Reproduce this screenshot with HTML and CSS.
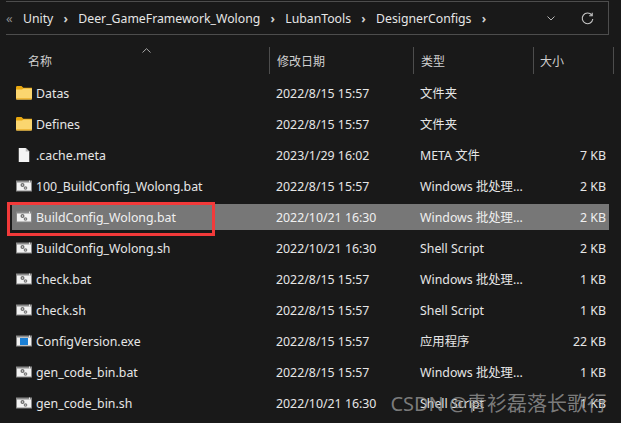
FILE: index.html
```html
<!DOCTYPE html>
<html lang="zh-CN">
<head>
    <meta charset="UTF-8">
    <title>DesignerConfigs</title>
    <link rel="stylesheet" href="styles.css">
</head>
<body>
    <svg class="defs" width="0" height="0">
        <symbol id="i-folder" viewBox="0 0 16 14">
            <path d="M0 1.500C0 .7.5 0 1.200 0h4.300l1.800 1.800H16V4H0z" fill="#e8a70f"/>
            <path d="M0 3.600l6-.2 1.500-1H15c.6 0 1 .5 1 1v9c0 .7-.5 1.200-1.200 1.200H1.200C.5 13.600 0 13.100 0 12.400z" fill="#fbd66f"/>
            <path d="M0 12h16v.4c0 .7-.5 1.200-1.200 1.200H1.200C.5 13.600 0 13.100 0 12.400z" fill="#eeb73a"/>
        </symbol>
        <symbol id="i-doc" viewBox="0 0 12 16">
            <path d="M0 0h8l4 4v12H0z" fill="#f4f4f4"/>
            <path d="M8 0l4 4H8z" fill="#bdbdbd"/>
        </symbol>
        <symbol id="i-bat" viewBox="0 0 16 11">
            <rect width="16" height="11" fill="#8a8a8a"/>
            <rect x="1" y="2" width="14" height="8" fill="#f2f2f2"/>
            <rect x="13" y="0" width="1" height="2" fill="#e8e8e8"/>
            <circle cx="6.500" cy="4.500" r="2" fill="#6e6e6e"/>
            <circle cx="9.500" cy="7.500" r="1.800" fill="#7c7c7c"/>
            <circle cx="6.500" cy="4.500" r=".7" fill="#e8e8e8"/>
            <circle cx="9.500" cy="7.500" r=".6" fill="#e8e8e8"/>
        </symbol>
        <symbol id="i-exe" viewBox="0 0 16 11">
            <rect width="16" height="11" fill="#8a8a8a"/>
            <rect x="1" y="2" width="14" height="8" fill="#f2f2f2"/>
            <rect x="13" y="0" width="1" height="2" fill="#e8e8e8"/>
            <rect x="4" y="2.500" width="8" height="7" fill="#1a7fd4"/>
        </symbol>
    </svg>

    <div class="explorer">
        <div class="address">
            <span class="crumb-back">«</span>
            <span class="crumb">Unity</span><span class="sep">›</span>
            <span class="crumb">Deer_GameFramework_Wolong</span><span class="sep">›</span>
            <span class="crumb">LubanTools</span><span class="sep">›</span>
            <span class="crumb">DesignerConfigs</span><span class="sep">›</span>
            <svg class="chevron" width="8" height="5" viewBox="0 0 8 5"><path d="M.5.5L4 4 7.500.5" fill="none" stroke="#b5b5b5"/></svg>
            <svg class="refresh" width="13" height="13" viewBox="0 0 13 13"><path d="M10.800 3.200A5.300 5.300 0 1 0 11.800 7" fill="none" stroke="#c8c8c8" stroke-width="1.100"/><path d="M11.200.8v3H8.200" fill="none" stroke="#c8c8c8" stroke-width="1.100"/></svg>
        </div>

        <div class="head">
            <div class="col-head name-head">名称<svg class="sort" width="9" height="5" viewBox="0 0 9 5"><path d="M.5 4.500L4.500.7l4 3.800" fill="none" stroke="#a8a8a8"/></svg></div>
            <div class="col-head">修改日期</div>
            <div class="col-head">类型</div>
            <div class="col-head size-head">大小</div>
        </div>

        <ul class="files">
            <li class="row"><span class="name"><svg class="icon"><use href="#i-folder"/></svg>Datas</span><span>2022/8/15 15:57</span><span>文件夹</span><span class="size"></span></li>
            <li class="row"><span class="name"><svg class="icon"><use href="#i-folder"/></svg>Defines</span><span>2022/8/15 15:57</span><span>文件夹</span><span class="size"></span></li>
            <li class="row"><span class="name"><svg class="icon"><use href="#i-doc"/></svg>.cache.meta</span><span>2023/1/29 16:02</span><span>META 文件</span><span class="size">7 KB</span></li>
            <li class="row"><span class="name"><svg class="icon"><use href="#i-bat"/></svg>100_BuildConfig_Wolong.bat</span><span>2022/8/15 15:57</span><span>Windows 批处理...</span><span class="size">2 KB</span></li>
            <li class="row selected"><span class="name"><svg class="icon"><use href="#i-bat"/></svg>BuildConfig_Wolong.bat</span><span>2022/10/21 16:30</span><span>Windows 批处理...</span><span class="size">2 KB</span><i class="mark"></i></li>
            <li class="row"><span class="name"><svg class="icon"><use href="#i-bat"/></svg>BuildConfig_Wolong.sh</span><span>2022/10/21 16:30</span><span>Shell Script</span><span class="size">2 KB</span></li>
            <li class="row"><span class="name"><svg class="icon"><use href="#i-bat"/></svg>check.bat</span><span>2022/8/15 15:57</span><span>Windows 批处理...</span><span class="size">1 KB</span></li>
            <li class="row"><span class="name"><svg class="icon"><use href="#i-bat"/></svg>check.sh</span><span>2022/8/15 15:57</span><span>Shell Script</span><span class="size">1 KB</span></li>
            <li class="row"><span class="name"><svg class="icon"><use href="#i-exe"/></svg>ConfigVersion.exe</span><span>2022/8/15 15:57</span><span>应用程序</span><span class="size">22 KB</span></li>
            <li class="row"><span class="name"><svg class="icon"><use href="#i-bat"/></svg>gen_code_bin.bat</span><span>2022/8/15 15:57</span><span>Windows 批处理...</span><span class="size">1 KB</span></li>
            <li class="row"><span class="name"><svg class="icon"><use href="#i-bat"/></svg>gen_code_bin.sh</span><span>2022/10/21 16:30</span><span>Shell Script</span><span class="size">1 KB</span></li>
        </ul>
        <div class="watermark">CSDN @青衫磊落长歌行</div>
    </div>
</body>
</html>
```

FILE: styles.css
```css
body,ul,li{
    padding: 0;
    margin: 0;
}
ul{
    list-style-type: none;
}
body{
    background-color: #191919;
    overflow: hidden;
}
.defs{
    display: block;
    height: 0;
}
.explorer{
    position: relative;
    width: 621px;
    height: 423px;
    overflow: hidden;
    padding-top: 1px;
    box-sizing: border-box;
    font-family: "Noto Sans", "Noto Sans CJK SC", sans-serif;
    font-size: 12.350px;
    color: #e6e6e6;
}
.address{
    display: flex;
    align-items: center;
    width: 603px;
    height: 34px;
    box-sizing: border-box;
    margin-left: 6px;
    padding: 0 14px 0 0;
    border: 1px solid #4d4d4d;
    border-left: none;
    font-size: 12.250px;
}
.crumb-back{
    width: 17px;
    color: #8c8c8c;
    font-size: 13px;
}
.sep{
    width: 25px;
    text-align: center;
    font-weight: bold;
    color: #d0d0d0;
}
.chevron{
    margin-left: auto;
    margin-right: 26px;
}
.head{
    display: grid;
    grid-template-columns: 264px 144px 120px 80px;
    height: 27px;
    margin: 12px 0 0 6px;
    font-size: 12px;
}
.col-head{
    position: relative;
    display: flex;
    align-items: center;
    padding-left: 7px;
    border-right: 1px solid #4d4d4d;
    color: #d0d0d0;
}
.name-head{
    padding-left: 22px;
}
.size-head{
    padding-left: 6px;
}
.sort{
    position: absolute;
    top: 1px;
    left: 136px;
}
.files{
    margin-top: 6px;
}
.row{
    position: relative;
    display: grid;
    grid-template-columns: 264px 144px 120px 69px;
    align-items: center;
    height: 26px;
    margin: 0 12px 5px 12px;
}
.row span{
    white-space: nowrap;
}
.name{
    display: flex;
    align-items: center;
}
.icon{
    width: 16px;
    height: 14px;
    margin: 0 4px;
    flex: none;
}
.size{
    padding-right: 3px;
    text-align: right;
}
.selected{
    background-color: #777;
    color: #f0f0f0;
}
.mark{
    position: absolute;
    top: -2px;
    left: -5px;
    width: 202px;
    height: 28px;
    border: 3px solid #f23a3a;
}
.watermark{
    position: absolute;
    right: 14px;
    bottom: 7px;
    font-size: 20px;
    line-height: 24px;
    color: rgba(150,150,150,.8);
    white-space: nowrap;
}
```
